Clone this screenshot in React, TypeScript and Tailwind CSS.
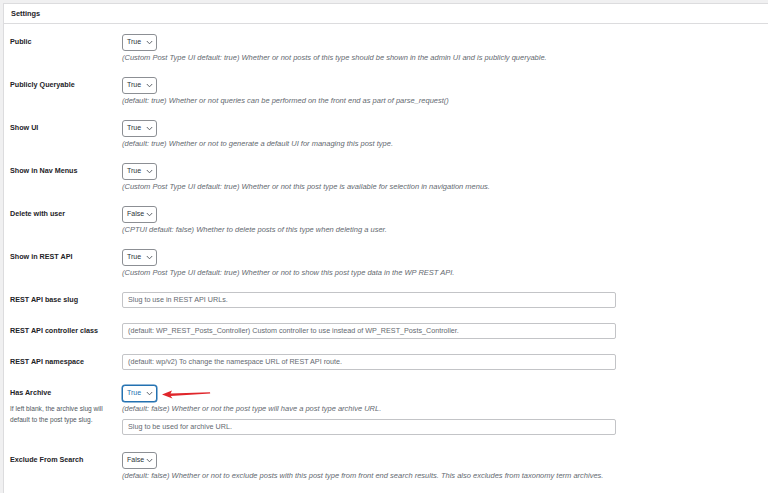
import React from "react";

type Row =
  | { kind: "select"; label: string; value: string; desc: string; active?: boolean }
  | { kind: "text"; label: string; placeholder: string };

const rows: Row[] = [
  {
    kind: "select",
    label: "Public",
    value: "True",
    desc: "(Custom Post Type UI default: true) Whether or not posts of this type should be shown in the admin UI and is publicly queryable.",
  },
  {
    kind: "select",
    label: "Publicly Queryable",
    value: "True",
    desc: "(default: true) Whether or not queries can be performed on the front end as part of parse_request()",
  },
  {
    kind: "select",
    label: "Show UI",
    value: "True",
    desc: "(default: true) Whether or not to generate a default UI for managing this post type.",
  },
  {
    kind: "select",
    label: "Show in Nav Menus",
    value: "True",
    desc: "(Custom Post Type UI default: true) Whether or not this post type is available for selection in navigation menus.",
  },
  {
    kind: "select",
    label: "Delete with user",
    value: "False",
    desc: "(CPTUI default: false) Whether to delete posts of this type when deleting a user.",
  },
  {
    kind: "select",
    label: "Show in REST API",
    value: "True",
    desc: "(Custom Post Type UI default: true) Whether or not to show this post type data in the WP REST API.",
  },
  { kind: "text", label: "REST API base slug", placeholder: "Slug to use in REST API URLs." },
  {
    kind: "text",
    label: "REST API controller class",
    placeholder: "(default: WP_REST_Posts_Controller) Custom controller to use instead of WP_REST_Posts_Controller.",
  },
  {
    kind: "text",
    label: "REST API namespace",
    placeholder: "(default: wp/v2) To change the namespace URL of REST API route.",
  },
];

const Chevron = () => (
  <svg width="7" height="5" viewBox="0 0 7 5" className="shrink-0">
    <polyline points="0.8,1 3.5,3.8 6.2,1" fill="none" stroke="currentColor" strokeWidth="0.9" />
  </svg>
);

const Select = ({ value, active }: { value: string; active?: boolean }) => (
  <div
    className={`h-[17px] w-[35px] rounded-[3px] border bg-white flex items-center justify-between pl-[4px] pr-[3px] text-[7px] ${
      active
        ? "border-[#2271b1] text-[#2271b1] shadow-[0_0_0_0.5px_#2271b1]"
        : "border-[#8c8f94] text-[#2c3338]"
    }`}
  >
    <span>{value}</span>
    <span className="text-[#50575e]">
      <Chevron />
    </span>
  </div>
);

const Desc = ({ children }: { children: React.ReactNode }) => (
  <p className="mt-[2px] text-[7.5px] italic leading-[9px] text-[#646970] whitespace-nowrap">{children}</p>
);

const TextInput = ({ placeholder }: { placeholder: string }) => (
  <div className="h-[16px] w-[494px] rounded-[2px] border border-[#c3c4c7] bg-white flex items-center pl-[5px] text-[7.2px] text-[#646970] whitespace-nowrap overflow-hidden">
    {placeholder}
  </div>
);

const Label = ({ children }: { children: React.ReactNode }) => (
  <div className="w-[112px] shrink-0 text-[7.2px] font-semibold text-[#1d2327] whitespace-nowrap">{children}</div>
);

export default function App() {
  return (
    <div
      className="min-h-[493px] w-[768px] overflow-hidden bg-[#f0f0f1] pl-[3px] pt-[3px]"
      style={{ fontFamily: '"Liberation Sans", Arial, sans-serif' }}
    >
      <div className="min-h-[490px] border-l border-t border-[#dcdcde] bg-white">
        <div className="h-[20px] border-b border-[#dcdcde] flex items-center pl-[7px] text-[7.4px] font-semibold text-[#1d2327]">
          Settings
        </div>

        <div className="pl-[6px]">
          {rows.map((r) =>
            r.kind === "select" ? (
              <div key={r.label} className="h-[43px] pt-[10px] flex">
                <Label>
                  <div className="h-[17px] flex items-center">{r.label}</div>
                </Label>
                <div>
                  <Select value={r.value} />
                  <Desc>{r.desc}</Desc>
                </div>
              </div>
            ) : (
              <div key={r.label} className="h-[31px] pt-[10px] flex">
                <Label>
                  <div className="h-[16px] flex items-center">{r.label}</div>
                </Label>
                <TextInput placeholder={r.placeholder} />
              </div>
            )
          )}

          {/* Has Archive */}
          <div className="h-[67px] pt-[10px] flex">
            <Label>
              <div className="h-[17px] flex items-center">Has Archive</div>
              <p className="mt-[1px] text-[6.6px] font-normal leading-[11px] text-[#50575e]">
                If left blank, the archive slug will
                <br />
                default to the post type slug.
              </p>
            </Label>
            <div>
              <div className="flex items-center">
                <Select value="True" active />
                <svg width="52" height="10" viewBox="0 0 52 10" className="ml-[5px]">
                  <polygon points="0,5.6 10,1.6 8.5,4.6 48,3.2 48.2,4.4 8.7,7 10.5,9.6" fill="#e0262b" />
                </svg>
              </div>
              <Desc>(default: false) Whether or not the post type will have a post type archive URL.</Desc>
              <div className="mt-[6px]">
                <TextInput placeholder="Slug to be used for archive URL." />
              </div>
            </div>
          </div>

          {/* Exclude From Search */}
          <div className="h-[52px] pt-[10px] flex">
            <Label>
              <div className="h-[17px] flex items-center">Exclude From Search</div>
            </Label>
            <div>
              <Select value="False" />
              <Desc>
                (default: false) Whether or not to exclude posts with this post type from front end search results. This
                also excludes from taxonomy term archives.
              </Desc>
            </div>
          </div>
        </div>
      </div>
    </div>
  );
}
